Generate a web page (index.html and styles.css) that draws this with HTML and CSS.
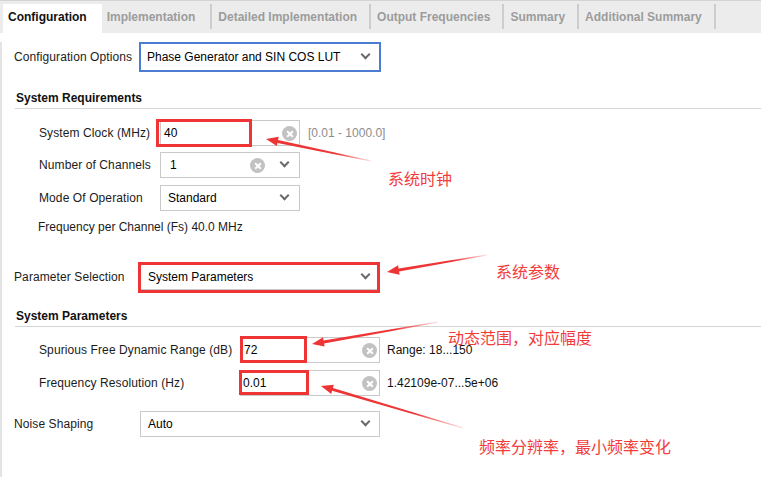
FILE: index.html
```html
<!DOCTYPE html>
<html>
<head>
<meta charset="utf-8">
<link rel="stylesheet" href="styles.css">
</head>
<body>
<div class="tabs">
  <div class="tab active">Configuration</div>
  <div class="tab first-tab">Implementation</div><span class="sep"></span>
  <div class="tab">Detailed Implementation</div><span class="sep"></span>
  <div class="tab">Output Frequencies</div><span class="sep"></span>
  <div class="tab">Summary</div><span class="sep"></span>
  <div class="tab">Additional Summary</div><span class="sep"></span>
</div>
<div class="panel">
  <div class="row row-config">
    <label class="lbl-top">Configuration Options</label>
    <div class="box select wide focus"><span class="val">Phase Generator and SIN COS LUT</span><span class="chev"></span></div>
  </div>

  <div class="section sec-req">System Requirements</div>

  <div class="row sub first">
    <label class="lbl-sub">System Clock (MHz)</label>
    <div class="box input narrow"><span class="val tight">40</span><span class="clear"></span></div>
    <span class="hint range">[0.01 - 1000.0]</span>
  </div>
  <div class="row sub">
    <label class="lbl-sub">Number of Channels</label>
    <div class="box select narrow"><span class="val combo">1</span><span class="clear combo-clear"></span><span class="chev"></span></div>
  </div>
  <div class="row sub mode">
    <label class="lbl-sub">Mode Of Operation</label>
    <div class="box select narrow"><span class="val">Standard</span><span class="chev"></span></div>
  </div>
  <div class="fs">Frequency per Channel (Fs) 40.0 MHz</div>

  <div class="row row-param">
    <label class="lbl-top">Parameter Selection</label>
    <div class="box select wide"><span class="val">System Parameters</span><span class="chev"></span></div>
  </div>

  <div class="section sec-par">System Parameters</div>

  <div class="row sub2 first2">
    <label class="lbl-sub2">Spurious Free Dynamic Range (dB)</label>
    <div class="box input narrow"><span class="val tight">72</span><span class="clear"></span></div>
    <span class="hint">Range: 18...150</span>
  </div>
  <div class="row sub2 second2">
    <label class="lbl-sub2">Frequency Resolution (Hz)</label>
    <div class="box input narrow"><span class="val tight2">0.01</span><span class="clear"></span></div>
    <span class="hint">1.42109e-07...5e+06</span>
  </div>
  <div class="row row-noise">
    <label class="lbl-top">Noise Shaping</label>
    <div class="box select wide"><span class="val">Auto</span><span class="chev"></span></div>
  </div>
</div>

<svg class="overlay" width="761" height="477" viewBox="0 0 761 477">
  <defs>
    <linearGradient id="g1" gradientUnits="userSpaceOnUse" x1="371" y1="161" x2="266" y2="139">
      <stop offset="0" stop-color="#ee3434" stop-opacity="0.15"/>
      <stop offset="0.35" stop-color="#ee3434" stop-opacity="1"/>
    </linearGradient>
    <linearGradient id="g2" gradientUnits="userSpaceOnUse" x1="487" y1="255" x2="387" y2="272">
      <stop offset="0" stop-color="#ee3434" stop-opacity="0.15"/>
      <stop offset="0.35" stop-color="#ee3434" stop-opacity="1"/>
    </linearGradient>
    <linearGradient id="g3" gradientUnits="userSpaceOnUse" x1="438" y1="322" x2="312" y2="344">
      <stop offset="0" stop-color="#ee3434" stop-opacity="0.15"/>
      <stop offset="0.35" stop-color="#ee3434" stop-opacity="1"/>
    </linearGradient>
    <linearGradient id="g4" gradientUnits="userSpaceOnUse" x1="463" y1="428" x2="321" y2="386">
      <stop offset="0" stop-color="#ee3434" stop-opacity="0.15"/>
      <stop offset="0.35" stop-color="#ee3434" stop-opacity="1"/>
    </linearGradient>
  </defs>
  <g fill="none" stroke="#ee3434" stroke-width="3">
    <rect x="157.5" y="120.5" width="93" height="25"/>
    <rect x="139.5" y="263.5" width="239" height="28"/>
    <rect x="241.5" y="337.5" width="64" height="24"/>
    <rect x="240.5" y="371.5" width="67" height="22"/>
  </g>
  <polygon fill="url(#g1)" points="371.1,160.5 278.06,139.99 278.67,136.8 266,139 276.83,146.1 277.44,142.93 370.9,161.5"/>
  <polygon fill="url(#g2)" points="486.92,254.51 398.58,268.51 398.08,265.3 387,272 399.58,274.7 399.08,271.47 487.08,255.49"/>
  <polygon fill="url(#g3)" points="437.91,321.51 323.56,340.46 323.05,337.3 312,344 324.59,346.6 324.08,343.42 438.09,322.49"/>
  <polygon fill="url(#g4)" points="463.14,427.52 332.94,387.96 333.79,384.8 321,386 331.23,394 332.08,390.84 462.86,428.48"/>
</svg>
<div class="note n1">系统时钟</div>
<div class="note n2">系统参数</div>
<div class="note n3">动态范围，对应幅度</div>
<div class="note n4">频率分辨率，最小频率变化</div>
</body>
</html>
```

FILE: styles.css
```css
* { box-sizing: border-box; }
body {
  margin: 0;
  width: 761px;
  height: 477px;
  overflow: hidden;
  position: relative;
  background: #fff;
  font-family: "Liberation Sans", Arial, sans-serif;
  font-size: 12px;
  color: #1b1b1b;
}
.tabs {
  display: flex;
  height: 33px;
  background: #ececec;
  border-top: 1px solid #d3d3d3;
  padding-left: 3px;
}
.tab {
  display: flex;
  align-items: center;
  height: 32px;
  padding: 0 12px 0 6px;
  font-weight: bold;
  color: #9c9c9c;
  white-space: nowrap;
}
.tab.first-tab { padding-left: 5px; padding-right: 15px; }
.tab.active {
  background: #fff;
  color: #111;
  margin-top: 3px;
  height: 29px;
  padding: 0 15px 3px 5px;
}
.sep {
  width: 2px;
  height: 25px;
  margin-top: 3px;
  background: #cdcdcd;
}
.panel {
  height: 444px;
  border-left: 2px solid #e4e4e4;
  padding-left: 12px;
}
.row {
  display: flex;
  align-items: center;
}
label { letter-spacing: 0.1px; }
.lbl-top { width: 125px; flex: none; }
.lbl-sub { width: 121px; flex: none; }
.lbl-sub2 { width: 201px; flex: none; }
.sub { padding-left: 25px; margin-top: 6px; }
.sub.first { margin-top: 11px; }
.sub.mode { margin-top: 7px; }
.sub2 { padding-left: 25px; }
.first2 { margin-top: 10px; }
.second2 { margin-top: 7px; }
.row-config { margin-top: 9px; }
.row-param { margin-top: 28px; }
.row-noise { margin-top: 15px; }

.box {
  position: relative;
  display: flex;
  align-items: center;
  height: 26px;
  border: 1px solid #c9c9c9;
  background: #fff;
  color: #000;
}
.box.wide { width: 240px; margin-left: 1px; }
.row-config .box.wide { width: 242px; margin-left: 0; height: 30px; }
.row-param .box { height: 27px; }
.box.narrow { width: 140px; }
.box.focus { border: 2px solid #4c7dd2; }
.val { padding-left: 7px; white-space: nowrap; }
.focus .val { padding-left: 6px; }
.val.tight { padding-left: 3px; }
.val.tight2 { padding-left: 2px; }
.val.combo { padding-left: 9px; }

.chev {
  position: absolute;
  right: 10px;
  top: 50%;
  width: 7px;
  height: 7px;
  margin-top: -6px;
  border-right: 2px solid #6a6a6a;
  border-bottom: 2px solid #6a6a6a;
  transform: rotate(45deg);
}
.narrow .chev { right: 11px; }
.clear {
  position: absolute;
  right: 2px;
  top: 50%;
  width: 15px;
  height: 15px;
  margin-top: -7px;
  border-radius: 50%;
  background: #c2c2c2;
}
.clear::before, .clear::after {
  content: "";
  position: absolute;
  left: 6.5px;
  top: 3.5px;
  width: 2px;
  height: 8px;
  background: #fff;
  transform: rotate(45deg);
}
.clear::after { transform: rotate(-45deg); }
.clear.combo-clear { right: 34px; }

.hint { margin-left: 7px; color: #111; white-space: nowrap; }
.hint.range { margin-left: 8px; color: #8d8d8d; }

.section {
  margin-left: 1px;
  padding-left: 1px;
  font-weight: bold;
  line-height: 16px;
  padding-bottom: 2px;
  border-bottom: 1px solid #d6d6d6;
  color: #111;
}
.sec-req { margin-top: 18px; }
.sec-par { margin-top: 18px; }
.fs {
  padding-left: 24px;
  margin-top: 8px;
  line-height: 16px;
}

.overlay {
  position: absolute;
  left: 0;
  top: 0;
  pointer-events: none;
}
.note {
  position: absolute;
  font-family: "Noto Sans CJK SC", sans-serif;
  font-size: 16px;
  line-height: 16px;
  color: #f23c3c;
  white-space: nowrap;
}
.n1 { left: 388px; top: 170px; }
.n2 { left: 496px; top: 263px; }
.n3 { left: 448px; top: 330px; line-height: 14px; }
.n4 { left: 479px; top: 438px; }
```
